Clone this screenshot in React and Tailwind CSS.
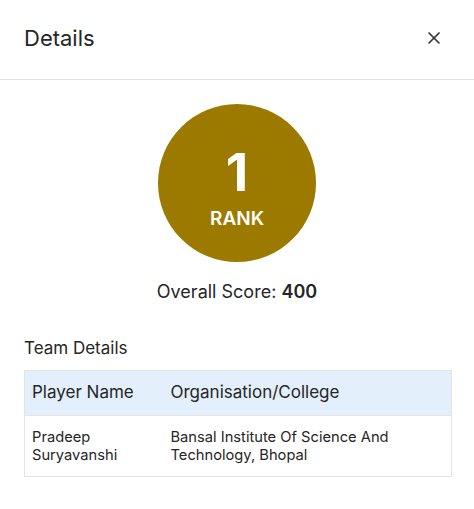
import { X } from "lucide-react";

// Modal-style details panel: header, rank badge, team table
const players = [
  { name: "Pradeep Suryavanshi", org: "Bansal Institute Of Science And Technology, Bhopal" },
];

export default function App() {
  return (
    <div className="w-[474px] h-[509px] bg-white text-[#262626] font-['Inter',sans-serif]">
      <div className="h-[80px] flex items-center justify-between pl-6 pr-[30px] pb-[4px] border-b border-[#e2e2e2]">
        <h2 className="text-[22px] leading-none font-normal">Details</h2>
        <X size={20} strokeWidth={2} className="text-[#333]" />
      </div>

      <div className="flex flex-col items-center pt-[24px]">
        <div className="w-[158px] h-[158px] rounded-full bg-[#9c7a00] text-white flex flex-col items-center justify-center">
          <span className="text-[52px] leading-none font-bold mt-[8px]">1</span>
          <span className="text-[19px] leading-none font-semibold mt-[10px]">RANK</span>
        </div>
        <p className="mt-[21px] text-[18px] leading-none">
          Overall Score: <span className="font-semibold">400</span>
        </p>
      </div>

      <div className="px-6 mt-[39px]">
        <h3 className="text-[17px] leading-none font-normal">Team Details</h3>
        <table className="mt-[13px] w-[428px] border border-[#e4e4e4] border-collapse text-left">
          <thead>
            <tr className="bg-[#e3effb] h-[45px]">
              <th className="font-normal text-[17px] pl-[7px] w-[138px]">Player Name</th>
              <th className="font-normal text-[17px] pl-[8px]">Organisation/College</th>
            </tr>
          </thead>
          <tbody>
            {players.map((p) => (
              <tr key={p.name} className="h-[61px] border-t border-[#e4e4e4]">
                <td className="text-[14.7px] leading-[18px] pl-[7px] pr-2 align-middle">{p.name}</td>
                <td className="text-[14.7px] leading-[18px] pl-[8px] pr-4 align-middle">{p.org}</td>
              </tr>
            ))}
          </tbody>
        </table>
      </div>
    </div>
  );
}
